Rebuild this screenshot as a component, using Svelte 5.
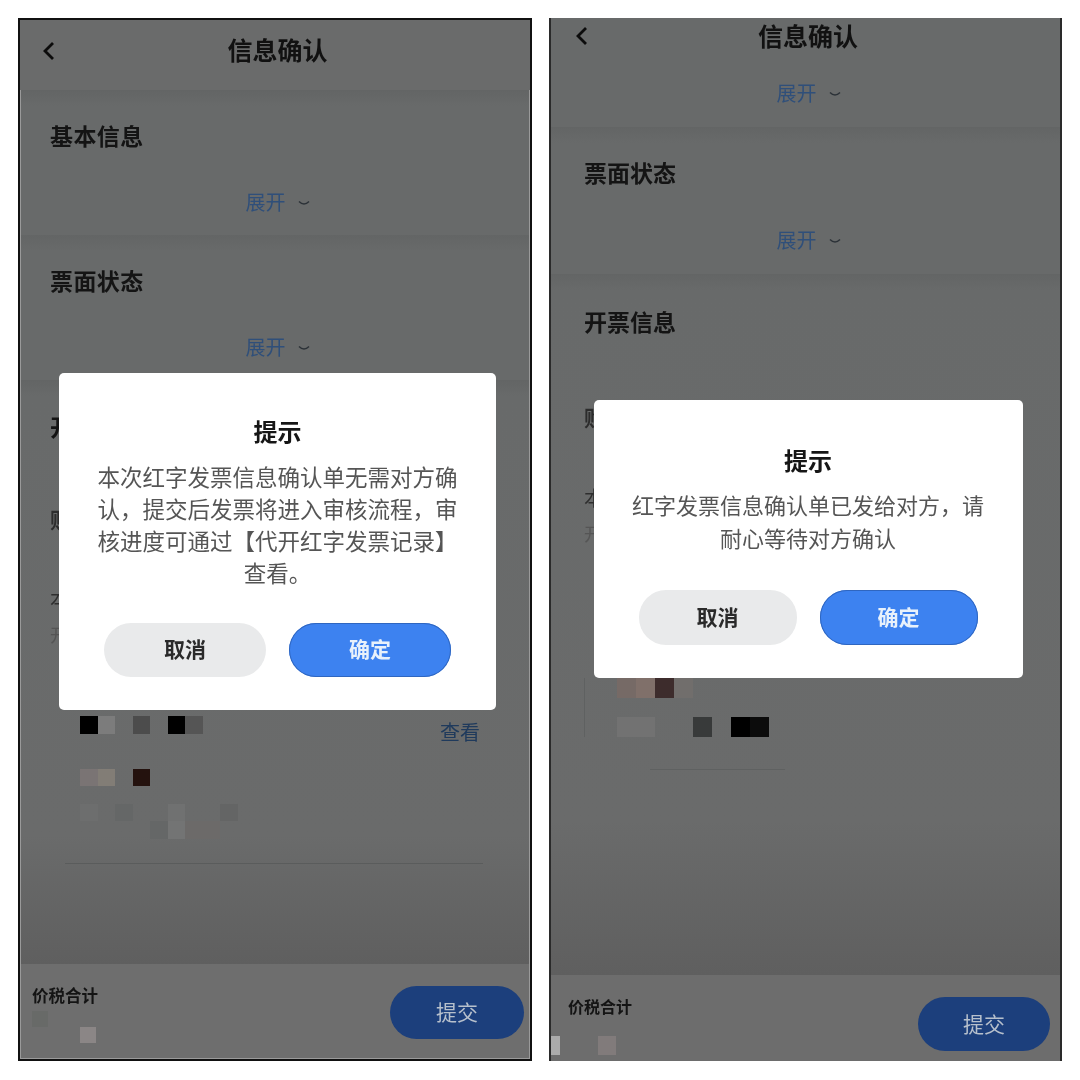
<script lang="ts">
    type Cell = [number, number, string];

    const leftCells: Cell[] = [
        [0, 0, "#000"], [1, 0, "#7c7c7c"], [3, 0, "#4c4c4c"], [5, 0, "#000"], [6, 0, "#555"],
        [0, 3, "#7a7474"], [1, 3, "#827d76"], [3, 3, "#24120e"],
        [0, 5, "#6d6e6e"], [2, 5, "#656767"], [5, 5, "#707171"], [8, 5, "#646565"],
        [4, 6, "#656767"], [5, 6, "#737474"], [6, 6, "#6c6a69"], [7, 6, "#6c6a69"]
    ];
    const rightCells: Cell[] = [
        [0, 0, "#766a66"], [1, 0, "#80706a"], [2, 0, "#3d2c2c"], [3, 0, "#716e6c"],
        [0, 2, "#727272"], [1, 2, "#727272"], [4, 2, "#383a3a"], [6, 2, "#000"], [7, 2, "#0c0c0c"]
    ];
    const leftFoot: Cell[] = [[0, 0, "#686a68"], [3, 1, "#8b8686"]];
    const rightFoot: Cell[] = [[0, 0, "#ababab"], [2, 0, "#817b7b"]];

    const leftBody = ["本次红字发票信息确认单无需对方确", "认，提交后发票将进入审核流程，审", "核进度可通过【代开红字发票记录】", "查看。"];
    const rightBody = ["红字发票信息确认单已发给对方，请", "耐心等待对方确认"];
</script>

{#snippet mosaic(cells: Cell[], kind: string)}
    <div class="mosaic {kind}">
        {#each cells as [col, row, color]}
            <i style="grid-column: {col + 1}; grid-row: {row + 1}; background: {color}"></i>
        {/each}
    </div>
{/snippet}

{#snippet toggle()}
    <div class="toggle">
        <span>展开</span>
        <svg width="12" height="7" viewBox="0 0 12 7"><path d="M1 1.5 Q6 6.5 11 1.5" fill="none" stroke="#2c3238" stroke-width="1.5" /></svg>
    </div>
{/snippet}

{#snippet header()}
    <header>
        <svg width="13" height="20" viewBox="0 0 13 20"><path d="M11 2 L3 10 L11 18" fill="none" stroke="#0c0c0c" stroke-width="2.8" /></svg>
        <h1>信息确认</h1>
    </header>
{/snippet}

{#snippet modal(lines: string[])}
    <div class="overlay">
        <div class="modal">
            <h2>提示</h2>
            <div class="body">
                {#each lines as line}
                    <p>{line}</p>
                {/each}
            </div>
            <div class="actions">
                <button class="cancel">取消</button>
                <button class="ok">确定</button>
            </div>
        </div>
    </div>
{/snippet}

<div class="stage">
    <div class="phone left">
        {@render header()}
        <section>
            <h3>基本信息</h3>
            {@render toggle()}
        </section>
        <section>
            <h3>票面状态</h3>
            {@render toggle()}
        </section>
        <section class="last">
            <h3>开票信息</h3>
            <div class="sub">购</div>
            <div class="note">本</div>
            <div class="faint">开</div>
            <div class="card">
                {@render mosaic(leftCells, "big")}
                <span class="view">查看</span>
            </div>
            <div class="line"></div>
        </section>
        <footer>
            <div class="total">
                <span>价税合计</span>
                {@render mosaic(leftFoot, "foot")}
            </div>
            <button class="submit">提交</button>
        </footer>
        {@render modal(leftBody)}
    </div>

    <div class="phone right">
        {@render header()}
        <section class="cut">
            {@render toggle()}
        </section>
        <section>
            <h3>票面状态</h3>
            {@render toggle()}
        </section>
        <section class="last">
            <h3>开票信息</h3>
            <div class="sub">购</div>
            <div class="note">本</div>
            <div class="faint">开</div>
            <div class="card">
                {@render mosaic(rightCells, "big")}
            </div>
            <div class="line"></div>
        </section>
        <footer>
            <div class="total">
                <span>价税合计</span>
                {@render mosaic(rightFoot, "foot")}
            </div>
            <button class="submit">提交</button>
        </footer>
        {@render modal(rightBody)}
    </div>
</div>

<style>
    :global(body) {
        background: #fff;
    }

    .stage {
        display: flex;
        gap: 17px;
        width: 1080px;
        height: 1080px;
        box-sizing: border-box;
        padding: 18px 0 0 18px;
        font-family: "Noto Sans CJK SC", "Noto Sans", sans-serif;
    }

    .phone {
        position: relative;
        display: flex;
        flex-direction: column;
        width: 514px;
        height: 1043px;
        box-sizing: border-box;
        overflow: hidden;
        background: #686a6a;
        border: 2px solid #111;
        filter: blur(0.45px);
    }

    .left {
        outline: 1px solid #9a9a9a;
        outline-offset: -3px;
    }

    .right {
        width: 513px;
        border-top: 0;
        border-bottom: 0;
        border-color: #2a2a2a;
    }

    header {
        display: flex;
        align-items: center;
        justify-content: center;
        position: relative;
        height: 70px;
        padding-bottom: 12px;
        box-sizing: border-box;
        background: #6a6b6b;
    }

    .right header {
        height: 59px;
        padding-bottom: 25px;
        background: #686a6a;
    }

    header svg {
        position: absolute;
        left: 22px;
        top: 21px;
    }

    .right header svg {
        left: 24px;
        top: 8px;
    }

    h1 {
        margin: 0 0 0 5px;
        font-size: 25px;
        line-height: 34px;
        font-weight: 700;
        color: #111;
    }

    section {
        padding: 30px 30px 19px;
        background: linear-gradient(#636565, #686a6a 16px);
    }

    .right section {
        padding: 30px 33px 20px;
    }

    .right section.cut {
        padding-top: 0;
        padding-bottom: 20px;
        background: #686a6a;
    }

    h3 {
        margin: 0;
        font-size: 23px;
        line-height: 30px;
        font-weight: 700;
        letter-spacing: 0.4px;
        color: #141414;
    }

    .right h3 {
        letter-spacing: 0;
    }

    .toggle {
        display: flex;
        align-items: center;
        justify-content: center;
        gap: 12px;
        height: 30px;
        margin-top: 36px;
        padding-left: 5px;
        font-size: 20px;
        color: #2f4f7a;
    }

    .toggle svg {
        margin-top: 5px;
    }

    .right .toggle {
        margin-top: 37px;
        padding-left: 6px;
    }

    .right .cut .toggle {
        margin-top: 0;
    }

    .last,
    .right .last {
        flex: 1;
        padding-top: 31px;
        background: linear-gradient(#636565, #686a6a 16px, #6a6b6b 78%, #5f5f5f);
    }

    .right .last {
        padding-top: 32px;
    }

    .sub {
        margin-top: 62px;
        font-size: 22px;
        line-height: 30px;
        font-weight: 700;
        color: #2c2c2c;
    }

    .note {
        margin-top: 51px;
        font-size: 20px;
        line-height: 30px;
        color: #2e2e2e;
    }

    .faint {
        margin-top: 5px;
        font-size: 18px;
        line-height: 30px;
        color: #555;
    }

    .card {
        display: flex;
        justify-content: space-between;
        align-items: flex-start;
        margin-top: 67px;
        padding: 0 20px 0 30px;
    }

    .right .sub {
        margin-top: 65px;
    }

    .right .note {
        margin-top: 52px;
    }

    .right .card {
        margin-top: 130px;
        padding-left: 32px;
        border-left: 1px solid #5f6161;
    }

    .view {
        margin-top: 6px;
        font-size: 20px;
        line-height: 20px;
        color: #1f3a5c;
    }

    .line {
        height: 1px;
        margin: 24px 17px 0 15px;
        background: #5a5c5c;
    }

    .right .line {
        margin: 32px 242px 0 66px;
        background: #5f6161;
    }

    .mosaic {
        display: grid;
    }

    .mosaic.big {
        grid-template-columns: repeat(9, 17.5px);
        grid-template-rows: repeat(7, 17.5px);
    }

    .right .mosaic.big {
        grid-template-columns: repeat(8, 19px);
        grid-template-rows: repeat(3, 19.5px);
    }

    .mosaic.foot {
        grid-template-columns: repeat(4, 16px);
        grid-template-rows: repeat(2, 16px);
        margin-top: 4px;
    }

    .right .mosaic.foot {
        grid-template-columns: 9px 38px 18px;
        grid-template-rows: 19px;
        margin: 19px 0 0 -17px;
    }

    footer {
        display: flex;
        justify-content: space-between;
        height: 95px;
        flex: none;
        box-sizing: border-box;
        padding: 22px 6px 0 12px;
        background: #6e6e6e;
    }

    .right footer {
        height: 86px;
        padding: 22px 10px 0 17px;
        background: #6d6d6d;
    }

    .total span {
        display: block;
        margin-top: -3px;
        font-size: 16.5px;
        line-height: 24px;
        font-weight: 700;
        color: #141414;
    }

    .right .total span {
        margin-top: -2px;
        font-size: 16px;
        line-height: 22px;
    }

    button {
        padding: 0 0 3px;
        border: 0;
        font-family: inherit;
    }

    .submit {
        width: 134px;
        height: 53px;
        border-radius: 27px;
        background: #1c3f7c;
        color: #b7c0cc;
        font-size: 21px;
    }

    .right .submit {
        width: 132px;
        height: 54px;
    }

    .overlay {
        position: absolute;
        inset: 0;
        display: flex;
        align-items: center;
        justify-content: center;
        padding: 3px 0 0 5px;
    }

    .right .overlay {
        padding: 0 0 2px 5px;
    }

    .modal {
        width: 437px;
        box-sizing: border-box;
        padding: 41px 0 33px;
        border-radius: 5px;
        background: #fff;
        text-align: center;
    }

    .right .modal {
        width: 429px;
        padding-top: 43px;
    }

    h2 {
        margin: 0;
        font-size: 24px;
        line-height: 34px;
        font-weight: 700;
        color: #161616;
    }

    .body {
        margin-top: 12px;
        font-size: 22.5px;
        line-height: 32px;
        color: #555;
    }

    .right .body {
        margin-top: 11px;
        font-size: 22px;
        line-height: 33px;
    }

    .body p {
        margin: 0;
        white-space: nowrap;
    }

    .actions {
        display: flex;
        justify-content: center;
        gap: 23px;
        margin-top: 35px;
    }

    .right .actions {
        margin-top: 36px;
    }

    .actions button {
        width: 162px;
        height: 54px;
        border-radius: 27px;
        font-size: 21px;
        font-weight: 700;
    }

    .right .actions button {
        width: 158px;
        height: 55px;
    }

    .cancel {
        background: #e9eaeb;
        color: #2a2a2a;
    }

    .ok {
        background: #3d82f0;
        color: #e8f1fb;
        box-shadow: inset 0 0 0 1px #2f66c0;
    }
</style>
